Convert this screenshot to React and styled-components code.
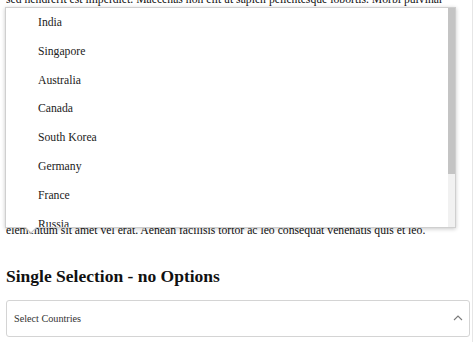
import React from "react";
import styled, { createGlobalStyle } from "styled-components";

const Global = createGlobalStyle`
  html, body { margin: 0; padding: 0; background: #fff; overflow: hidden; }
  body { font-family: "Liberation Serif", "Times New Roman", serif; color: #111; }
`;

const Page = styled.div`
  box-sizing: border-box;
  width: 473px;
  height: 342px;
  padding: 0 2px 0 6px;
  border-right: 1px solid #e6e6e6;
`;

const Demo = styled.section`
  position: relative;
  height: 237px;
  display: flex;
  flex-direction: column;
`;

const Clip = styled.div`
  height: 100%;
  overflow: hidden;
  display: flex;
  flex-direction: column;
  justify-content: space-between;
`;

const Line = styled.p`
  margin: ${(p) => (p.$cut ? "-7px 0 0" : "0")};
  font-size: 11.7px;
  line-height: 13.5px;
  white-space: nowrap;
  color: #111;
`;

const Popup = styled.div`
  position: absolute;
  left: -1px;
  top: 7px;
  width: 451px;
  height: 221px;
  box-sizing: border-box;
  display: flex;
  background: #fff;
  border: 1px solid #cfcfcf;
  box-shadow: 0 1px 4px rgba(0, 0, 0, 0.22);
`;

const Arrow = styled.span`
  position: absolute;
  left: 21px;
  bottom: -5px;
  width: 7px;
  height: 7px;
  background: #fff;
  border-right: 1px solid #c4c4c4;
  border-bottom: 1px solid #c4c4c4;
  transform: rotate(45deg);
`;

const List = styled.ul`
  flex: 1;
  list-style: none;
  margin: 0;
  padding: 1px 0 0 0;
  overflow: hidden;
`;

const Track = styled.div`
  width: 7px;
  background: #f1f1f1;
  display: flex;
  flex-direction: column;
`;

const Thumb = styled.div`
  height: 166px;
  background: #c4c4c4;
`;

const Item = styled.li`
  padding-left: 32px;
  font-size: 11.7px;
  line-height: 28.8px;
  height: 28.8px;
  color: #222;
`;

const Heading = styled.h2`
  margin: 29px 0 14px;
  font-size: 17.5px;
  line-height: 20px;
  font-weight: bold;
  color: #111;
`;

const Select = styled.div`
  box-sizing: border-box;
  height: 37px;
  display: flex;
  align-items: center;
  justify-content: space-between;
  padding: 0 6px 0 7px;
  border: 1px solid #d4d4d4;
  border-radius: 3px;
  background: #fff;
`;

const Placeholder = styled.span`
  font-size: 10.2px;
  color: #333;
`;

const Chevron = () => (
  <svg width="10" height="6" viewBox="0 0 10 6" style={{ marginTop: -1 }}>
    <polyline points="1,5 5,1 9,5" fill="none" stroke="#7a7a7a" strokeWidth="1.1" />
  </svg>
);

const countries = [
  "India",
  "Singapore",
  "Australia",
  "Canada",
  "South Korea",
  "Germany",
  "France",
  "Russia",
];

export default function App() {
  return (
    <>
      <Global />
      <Page>
        <Demo>
          <Clip>
            <Line $cut>
              sed hendrerit est imperdiet. Maecenas non elit ut sapien pellentesque lobortis. Morbi pulvinar
            </Line>
            <Line>
              elementum sit amet vel erat. Aenean facilisis tortor ac leo consequat venenatis quis et leo.
            </Line>
          </Clip>
          <Popup>
            <List>
              {countries.map((c) => (
                <Item key={c}>{c}</Item>
              ))}
            </List>
            <Track>
              <Thumb />
            </Track>
            <Arrow />
          </Popup>
        </Demo>
        <Heading>Single Selection - no Options</Heading>
        <Select>
          <Placeholder>Select Countries</Placeholder>
          <Chevron />
        </Select>
      </Page>
    </>
  );
}
